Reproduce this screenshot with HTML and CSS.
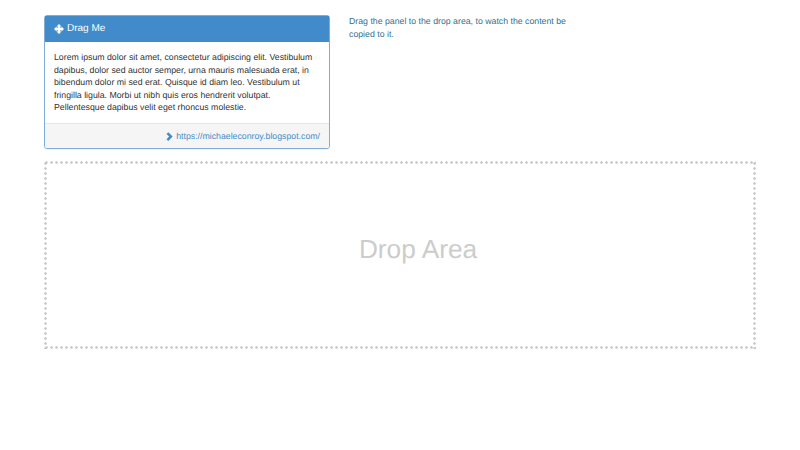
FILE: index.html
```html
<!DOCTYPE html>
<html>
<head>
    <meta charset="utf-8">
    <title>Drag and Drop Panel</title>
    <link rel="stylesheet" href="styles.css">
</head>
<body>
<div class="container">
    <div class="top-row">
        <div class="panel">
            <div class="panel-heading">
                <svg class="icon-move" viewBox="0 0 12 12"><path d="M6 0L9 3H7.4V4.6H9V3L12 6L9 9V7.4H7.4V9H9L6 12L3 9H4.6V7.4H3V9L0 6L3 3V4.6H4.6V3H3Z"></path></svg>
                <span>Drag Me</span>
            </div>
            <div class="panel-body">
                Lorem ipsum dolor sit amet, consectetur adipiscing elit. Vestibulum dapibus, dolor sed auctor semper, urna mauris malesuada erat, in bibendum dolor mi sed erat. Quisque id diam leo. Vestibulum ut fringilla ligula. Morbi ut nibh quis eros hendrerit volutpat. Pellentesque dapibus velit eget rhoncus molestie.
            </div>
            <div class="panel-footer">
                <svg class="icon-chevron" viewBox="0 0 8 10"><path d="M2.6 0L7.6 5L2.6 10L0.6 8L3.6 5L0.6 2Z"></path></svg>
                <a href="#">https://michaeleconroy.blogspot.com/</a>
            </div>
        </div>
        <p class="hint">Drag the panel to the drop area, to watch the content be copied to it.</p>
    </div>
    <div class="drop-area">Drop Area</div>
</div>
</body>
</html>
```

FILE: styles.css
```css
body {
    font-family: "Liberation Sans", Arial, sans-serif;
    font-size: 8.75px;
    line-height: 12.5px;
    text-rendering: geometricPrecision;
    color: #333;
    background-color: white;
    margin: 0;
}

.container {
    padding: 15px 44px 0;
}

.top-row {
    display: flex;
    align-items: flex-start;
    margin-bottom: 12px;
}

.panel {
    width: 286px;
    box-sizing: border-box;
    border: 1px solid #7fadd6;
    border-radius: 3px;
    box-shadow: 0 1px 1px rgba(0, 0, 0, 0.05);
    flex-shrink: 0;
}

.panel-heading {
    display: flex;
    align-items: center;
    gap: 3px;
    height: 26px;
    padding: 0 9px;
    font-size: 10px;
    color: white;
    background-color: #428bca;
}

.icon-move {
    width: 10px;
    height: 10px;
    fill: white;
}

.panel-body {
    padding: 9.4px 9px;
}

.panel-footer {
    display: flex;
    justify-content: flex-end;
    align-items: center;
    gap: 3px;
    height: 24px;
    padding: 0 9px;
    background-color: #f5f5f5;
    border-top: 1px solid #e6e6e6;
    border-radius: 0 0 2px 2px;
}

.panel-footer a {
    color: #428bca;
    text-decoration: none;
}

.icon-chevron {
    width: 7px;
    height: 9px;
    fill: #428bca;
}

.hint {
    margin: 0 0 0 19px;
    width: 225px;
    color: #31708f;
}

/* dots are 2.5px on a 5px pitch, a css dotted border can't do that */
.drop-area {
    --dot: radial-gradient(circle, #c8c8c8 0.9px, transparent 1.6px);
    height: 176px;
    padding: 0 0 12px 36px;
    display: flex;
    align-items: center;
    justify-content: center;
    background:
        var(--dot) left top / 5px 3px repeat-x,
        var(--dot) left bottom / 5px 3px repeat-x,
        var(--dot) left top / 3px 5px repeat-y,
        var(--dot) right top / 3px 5px repeat-y;
    font-size: 26.25px;
    color: #ccc;
}
```
